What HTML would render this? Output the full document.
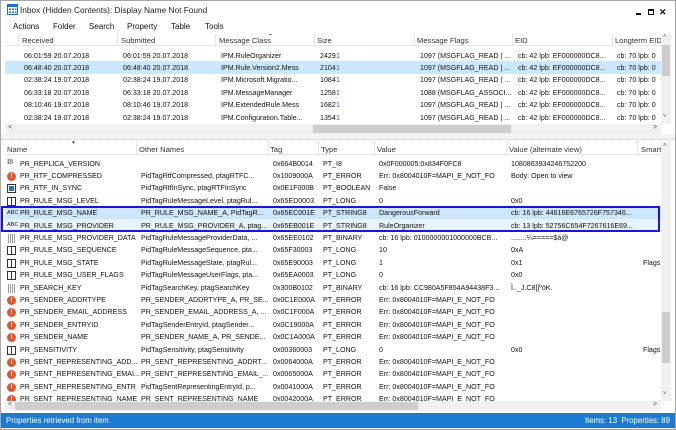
<!DOCTYPE html>
<html><head><meta charset="utf-8"><style>
*{margin:0;padding:0;box-sizing:border-box}
body{width:676px;height:430px;overflow:hidden;background:#fff;font-family:"Liberation Sans",Arial,sans-serif;font-size:7.1px;color:#111;position:relative}
.a{position:absolute;white-space:nowrap}
.win{position:absolute;left:0;top:0;width:676px;height:430px;border:1px solid #a8a8a8;background:#fff}
.title{left:20px;top:5px;font-size:8.3px;color:#222}
.menu span{position:absolute;top:22px;font-size:8px}
.hdr{position:absolute;left:5px;width:656px;height:12px;background:#fff;border-bottom:1px solid #e5e5e5;overflow:hidden}
.hdr span{position:absolute;top:2px;font-size:7.6px;color:#333;white-space:nowrap}
.sep{position:absolute;top:0;width:1px;height:12px;background:#e5e5e5}
.row{position:absolute;left:5px;width:656px;height:12.4px;overflow:hidden}
.row span{position:absolute;top:2.5px;white-space:nowrap}
.sel{background:#cce8ff}
.ic{position:absolute;top:2px;left:2px;width:9px;height:9px}
.err{border-radius:50%;background:#e2562e;color:#fff;font-weight:bold;font-size:7px;text-align:center;line-height:9px}
.vs{position:absolute;left:661px;width:10px;background:#f0f0f0}
.hs{position:absolute;left:5px;width:656px;height:10px;background:#f0f0f0}
.th{position:absolute;background:#cdcdcd}
</style></head><body>
<div class="win"></div>
<svg class="a" style="left:7px;top:4px" width="11" height="11"><rect x="0.5" y="0.5" width="10" height="10" fill="#fff" stroke="#1e6fc8"/><rect x="0.5" y="0.5" width="10" height="2.5" fill="#1e6fc8"/><g fill="#1e6fc8"><rect x="2" y="4.5" width="2" height="1.5"/><rect x="5" y="4.5" width="2" height="1.5"/><rect x="2" y="7.5" width="2" height="1.5"/><rect x="5" y="7.5" width="2" height="1.5"/><rect x="8" y="4.5" width="1.5" height="1.5"/><rect x="8" y="7.5" width="1.5" height="1.5"/></g></svg>
<div class="a title">Inbox (Hidden Contents): Display Name Not Found</div>
<div class="a" style="left:636px;top:13px;width:5px;height:2px;background:#111"></div>
<div class="a" style="left:648px;top:9px;width:6px;height:6px;border:1px solid #111;border-top-width:2px"></div>
<div class="a" style="left:659px;top:7px;font-size:9px;font-weight:bold">✕</div>
<div class="menu"><span style="left:13px">Actions</span><span style="left:53px">Folder</span><span style="left:89px">Search</span><span style="left:127px">Property</span><span style="left:171px">Table</span><span style="left:205px">Tools</span></div>

<div class="hdr" style="top:34px">
<div class="sep" style="left:13px"></div><div class="sep" style="left:112px"></div><div class="sep" style="left:210px"></div><div class="sep" style="left:309px"></div><div class="sep" style="left:409px"></div><div class="sep" style="left:507px"></div><div class="sep" style="left:607px"></div>
<span style="left:17px">Received</span><span style="left:116px">Submitted</span><span style="left:214px">Message Class</span><span style="left:312px">Size</span><span style="left:412px">Message Flags</span><span style="left:510px">EID</span><span style="left:610px">Longterm EID</span>
<span style="left:263px;top:-3px;font-size:5px;color:#555">▲</span>
</div>
<div class="row" style="top:49px"><span style="left:19px">06:01:59 20.07.2018</span><span style="left:118px">06:01:59 20.07.2018</span><span style="left:216px">IPM.RuleOrganizer</span><span style="left:315px">2429</span><span style="left:331px;color:#1c5fd0">1</span><span style="left:415px">1097 (MSGFLAG_READ | ...</span><span style="left:513px">cb: 42 lpb: EF000000DC8...</span><span style="left:612px">cb: 70 lpb: 0</span></div>
<div class="row sel" style="top:61.4px"><span style="left:19px">06:48:40 20.07.2018</span><span style="left:118px">06:48:40 20.07.2018</span><span style="left:216px">IPM.Rule.Version2.Mess</span><span style="left:315px">2104</span><span style="left:331px;color:#1c5fd0">1</span><span style="left:415px">1097 (MSGFLAG_READ | ...</span><span style="left:513px">cb: 42 lpb: EF000000DC8...</span><span style="left:612px">cb: 70 lpb: 0</span></div>
<div class="row" style="top:73.8px"><span style="left:19px">02:38:24 19.07.2018</span><span style="left:118px">02:38:24 19.07.2018</span><span style="left:216px">IPM.Microsoft.Migratio...</span><span style="left:315px">1084</span><span style="left:331px;color:#1c5fd0">1</span><span style="left:415px">1097 (MSGFLAG_READ | ...</span><span style="left:513px">cb: 42 lpb: EF000000DC8...</span><span style="left:612px">cb: 70 lpb: 0</span></div>
<div class="row" style="top:86.2px"><span style="left:19px">06:33:18 20.07.2018</span><span style="left:118px">06:33:18 20.07.2018</span><span style="left:216px">IPM.MessageManager</span><span style="left:315px">1258</span><span style="left:331px;color:#1c5fd0">1</span><span style="left:415px">1088 (MSGFLAG_ASSOCI...</span><span style="left:513px">cb: 42 lpb: EF000000DC8...</span><span style="left:612px">cb: 70 lpb: 0</span></div>
<div class="row" style="top:98.6px"><span style="left:19px">08:10:46 19.07.2018</span><span style="left:118px">08:10:46 19.07.2018</span><span style="left:216px">IPM.ExtendedRule.Mess</span><span style="left:315px">1682</span><span style="left:331px;color:#1c5fd0">1</span><span style="left:415px">1097 (MSGFLAG_READ | ...</span><span style="left:513px">cb: 42 lpb: EF000000DC8...</span><span style="left:612px">cb: 70 lpb: 0</span></div>
<div class="row" style="top:111px"><span style="left:19px">02:38:24 19.07.2018</span><span style="left:118px">02:38:24 19.07.2018</span><span style="left:216px">IPM.Configuration.Table...</span><span style="left:315px">1354</span><span style="left:331px;color:#1c5fd0">1</span><span style="left:415px">1097 (MSGFLAG_READ | ...</span><span style="left:513px">cb: 42 lpb: EF000000DC8...</span><span style="left:612px">cb: 70 lpb: 0</span></div>
<div class="vs" style="top:34px;height:90px"><div class="th" style="left:1px;width:8px;top:11px;height:31px"></div><span class="a" style="left:2px;top:0;font-size:6px;color:#666">˄</span><span class="a" style="left:2px;top:80px;font-size:6px;color:#666">˅</span></div>
<div class="hs" style="top:124px"><div class="th" style="left:308px;width:198px;top:1px;height:8px"></div><span class="a" style="left:3px;top:0;font-size:7px;color:#555">&lt;</span><span class="a" style="left:648px;top:0;font-size:7px;color:#555">&gt;</span></div>
<div class="a" style="left:1px;top:134px;width:674px;height:6px;background:#f3f3f3;border-bottom:1px dotted #ccc"></div>

<div class="hdr" style="top:141px;height:14px">
<div class="sep" style="left:131px;height:14px"></div><div class="sep" style="left:263px;height:14px"></div><div class="sep" style="left:313px;height:14px"></div><div class="sep" style="left:369px;height:14px"></div><div class="sep" style="left:501px;height:14px"></div><div class="sep" style="left:632px;height:14px"></div>
<span style="left:2px;top:4px">Name</span><span style="left:134px;top:4px">Other Names</span><span style="left:265px;top:4px">Tag</span><span style="left:316px;top:4px">Type</span><span style="left:372px;top:4px">Value</span><span style="left:504px;top:4px">Value (alternate view)</span><span style="left:636px;top:4px">Smart</span>
<span style="left:66px;top:-1px;font-size:5px;color:#555">▼</span>
</div>

<div class="row" style="top:157px"><span class="ic" style="font-size:7px;top:1px;font-family:'Liberation Serif',serif">I8</span><span style="left:15px">PR_REPLICA_VERSION</span><span style="left:268px">0x664B0014</span><span style="left:318px">PT_I8</span><span style="left:374px">0x0F000005:0x834F0FC8</span><span style="left:506px">1080863934246752200</span></div>
<div class="row" style="top:169.4px"><span class="ic err">!</span><span style="left:15px">PR_RTF_COMPRESSED</span><span style="left:136px">PidTagRtfCompressed, ptagRTFC...</span><span style="left:268px">0x1009000A</span><span style="left:318px">PT_ERROR</span><span style="left:374px">Err: 0x8004010F=MAPI_E_NOT_FO</span><span style="left:506px">Body: Open to view</span></div>
<div class="row" style="top:181.8px"><span class="ic" style="border:1px solid #333;background:#fff"><i style="position:absolute;left:1px;top:1px;width:5px;height:5px;background:#2a6cc4"></i></span><span style="left:15px">PR_RTF_IN_SYNC</span><span style="left:136px">PidTagRtfInSync, ptagRTFInSync</span><span style="left:268px">0x0E1F000B</span><span style="left:318px">PT_BOOLEAN</span><span style="left:374px">False</span></div>
<div class="row" style="top:194.2px"><span class="ic" style="border:1px solid #333;background:repeating-linear-gradient(90deg,#fff 0 3px,#333 3px 4px)"></span><span style="left:15px">PR_RULE_MSG_LEVEL</span><span style="left:136px">PidTagRuleMessageLevel, ptagRul...</span><span style="left:268px">0x65ED0003</span><span style="left:318px">PT_LONG</span><span style="left:374px">0</span><span style="left:506px">0x0</span></div>
<div class="row" style="top:206.6px;background:#cde6f9"><span class="ic" style="font-size:5.5px;top:3px">ABC</span><span style="left:15px">PR_RULE_MSG_NAME</span><span style="left:136px">PR_RULE_MSG_NAME_A, PidTagR...</span><span style="left:268px">0x65EC001E</span><span style="left:318px">PT_STRING8</span><span style="left:374px">DangerousForward</span><span style="left:506px">cb: 16 lpb: 44616E6765726F757346...</span></div>
<div class="row" style="top:219px;background:#e8f2fb"><span class="ic" style="font-size:5.5px;top:3px">ABC</span><span style="left:15px">PR_RULE_MSG_PROVIDER</span><span style="left:136px">PR_RULE_MSG_PROVIDER_A, ptag...</span><span style="left:268px">0x65EB001E</span><span style="left:318px">PT_STRING8</span><span style="left:374px">RuleOrganizer</span><span style="left:506px">cb: 13 lpb: 52756C654F7267616E69...</span></div>
<div class="row" style="top:231.4px"><span class="ic" style="background:repeating-linear-gradient(90deg,#fff 0 1px,#555 1px 2px);opacity:.6"></span><span style="left:15px">PR_RULE_MSG_PROVIDER_DATA</span><span style="left:136px">PidTagRuleMessageProviderData, ...</span><span style="left:268px">0x65EE0102</span><span style="left:318px">PT_BINARY</span><span style="left:374px">cb: 16 lpb: 0100000001000000BCB...</span><span style="left:506px">........¼=====$ä@</span></div>
<div class="row" style="top:243.8px"><span class="ic" style="border:1px solid #333;background:repeating-linear-gradient(90deg,#fff 0 3px,#333 3px 4px)"></span><span style="left:15px">PR_RULE_MSG_SEQUENCE</span><span style="left:136px">PidTagRuleMessageSequence, pta...</span><span style="left:268px">0x65F30003</span><span style="left:318px">PT_LONG</span><span style="left:374px">10</span><span style="left:506px">0xA</span></div>
<div class="row" style="top:256.2px"><span class="ic" style="border:1px solid #333;background:repeating-linear-gradient(90deg,#fff 0 3px,#333 3px 4px)"></span><span style="left:15px">PR_RULE_MSG_STATE</span><span style="left:136px">PidTagRuleMessageState, ptagRul...</span><span style="left:268px">0x65E90003</span><span style="left:318px">PT_LONG</span><span style="left:374px">1</span><span style="left:506px">0x1</span><span style="left:638px">Flags</span></div>
<div class="row" style="top:268.6px"><span class="ic" style="border:1px solid #333;background:repeating-linear-gradient(90deg,#fff 0 3px,#333 3px 4px)"></span><span style="left:15px">PR_RULE_MSG_USER_FLAGS</span><span style="left:136px">PidTagRuleMessageUserFlags, pta...</span><span style="left:268px">0x65EA0003</span><span style="left:318px">PT_LONG</span><span style="left:374px">0</span><span style="left:506px">0x0</span></div>
<div class="row" style="top:281px"><span class="ic" style="background:repeating-linear-gradient(90deg,#fff 0 1px,#555 1px 2px);opacity:.6"></span><span style="left:15px">PR_SEARCH_KEY</span><span style="left:136px">PidTagSearchKey, ptagSearchKey</span><span style="left:268px">0x300B0102</span><span style="left:318px">PT_BINARY</span><span style="left:374px">cb: 16 lpb: CC980A5F854A94438F3...</span><span style="left:506px">Ì.._J.C8[|ºöK.</span></div>
<div class="row" style="top:293.4px"><span class="ic err">!</span><span style="left:15px">PR_SENDER_ADDRTYPE</span><span style="left:136px">PR_SENDER_ADDRTYPE_A, PR_SE...</span><span style="left:268px">0x0C1E000A</span><span style="left:318px">PT_ERROR</span><span style="left:374px">Err: 0x8004010F=MAPI_E_NOT_FO</span></div>
<div class="row" style="top:305.8px"><span class="ic err">!</span><span style="left:15px">PR_SENDER_EMAIL_ADDRESS</span><span style="left:136px">PR_SENDER_EMAIL_ADDRESS_A, ...</span><span style="left:268px">0x0C1F000A</span><span style="left:318px">PT_ERROR</span><span style="left:374px">Err: 0x8004010F=MAPI_E_NOT_FO</span></div>
<div class="row" style="top:318.2px"><span class="ic err">!</span><span style="left:15px">PR_SENDER_ENTRYID</span><span style="left:136px">PidTagSenderEntryId, ptagSender...</span><span style="left:268px">0x0C19000A</span><span style="left:318px">PT_ERROR</span><span style="left:374px">Err: 0x8004010F=MAPI_E_NOT_FO</span></div>
<div class="row" style="top:330.6px"><span class="ic err">!</span><span style="left:15px">PR_SENDER_NAME</span><span style="left:136px">PR_SENDER_NAME_A, PR_SENDE...</span><span style="left:268px">0x0C1A000A</span><span style="left:318px">PT_ERROR</span><span style="left:374px">Err: 0x8004010F=MAPI_E_NOT_FO</span></div>
<div class="row" style="top:343px"><span class="ic" style="border:1px solid #333;background:repeating-linear-gradient(90deg,#fff 0 3px,#333 3px 4px)"></span><span style="left:15px">PR_SENSITIVITY</span><span style="left:136px">PidTagSensitivity, ptagSensitivity</span><span style="left:268px">0x00360003</span><span style="left:318px">PT_LONG</span><span style="left:374px">0</span><span style="left:506px">0x0</span><span style="left:638px">Flags</span></div>
<div class="row" style="top:355.4px"><span class="ic err">!</span><span style="left:15px">PR_SENT_REPRESENTING_ADD...</span><span style="left:136px">PR_SENT_REPRESENTING_ADDRT...</span><span style="left:268px">0x0064000A</span><span style="left:318px">PT_ERROR</span><span style="left:374px">Err: 0x8004010F=MAPI_E_NOT_FO</span></div>
<div class="row" style="top:367.8px"><span class="ic err">!</span><span style="left:15px">PR_SENT_REPRESENTING_EMAI...</span><span style="left:136px">PR_SENT_REPRESENTING_EMAIL_...</span><span style="left:268px">0x0065000A</span><span style="left:318px">PT_ERROR</span><span style="left:374px">Err: 0x8004010F=MAPI_E_NOT_FO</span></div>
<div class="row" style="top:380.2px"><span class="ic err">!</span><span style="left:15px">PR_SENT_REPRESENTING_ENTR</span><span style="left:136px">PidTagSentRepresentingEntryId, p...</span><span style="left:268px">0x0041000A</span><span style="left:318px">PT_ERROR</span><span style="left:374px">Err: 0x8004010F=MAPI_E_NOT_FO</span></div>
<div class="row" style="top:392.6px;height:8.4px"><span class="ic err">!</span><span style="left:15px">PR_SENT_REPRESENTING_NAME</span><span style="left:136px">PR_SENT_REPRESENTING_NAME</span><span style="left:268px">0x0042000A</span><span style="left:318px">PT_ERROR</span><span style="left:374px">Err: 0x8004010F=MAPI_E_NOT_FO</span></div>

<div class="a" style="left:1px;top:206px;width:659px;height:26px;border:2px solid #1616e0"></div>

<div class="vs" style="top:141px;height:260px"><div class="th" style="left:1px;width:8px;top:171px;height:51px"></div><span class="a" style="left:2px;top:2px;font-size:6px;color:#666">˄</span><span class="a" style="left:2px;top:250px;font-size:6px;color:#666">˅</span></div>
<div class="hs" style="top:401px"><div class="th" style="left:10px;width:403px;top:1px;height:8px"></div><span class="a" style="left:3px;top:0;font-size:7px;color:#555">&lt;</span><span class="a" style="left:648px;top:0;font-size:7px;color:#555">&gt;</span></div>

<div class="a" style="left:1px;top:413px;width:674px;height:15px;background:#1b7bd3;color:#fff;font-size:7.8px">
<span class="a" style="left:5px;top:3px">Properties retrieved from item</span>
<span class="a" style="left:584px;top:3px">Items: 13&nbsp; Properties: 89</span>
</div>
<div class="a" style="left:1px;top:428px;width:674px;height:1px;background:#e8e8e8"></div>
</body></html>
